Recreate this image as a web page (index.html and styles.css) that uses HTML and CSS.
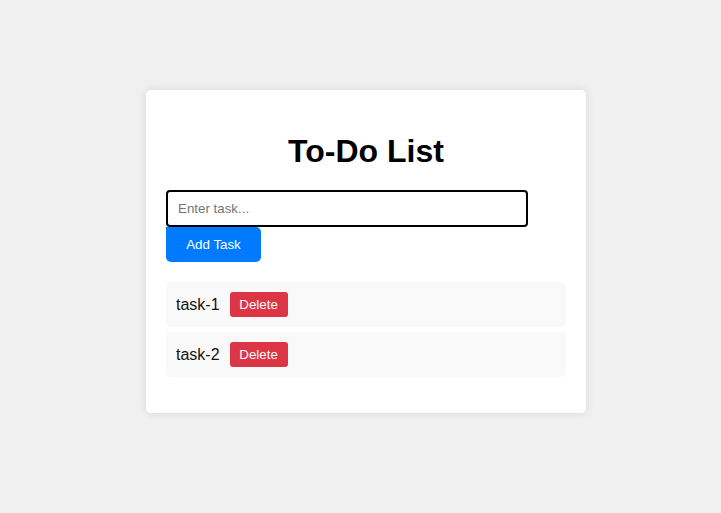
FILE: index.html
```html
<!DOCTYPE html>
<html lang="en">
<head>
    <meta charset="UTF-8">
    <title>To-Do List</title>
    <meta name="viewport" content="width=device-width, initial-scale=1.0">
    <link rel="stylesheet" href="styles.css">
</head>
<body>
    <div class="container">
        <h1>To-Do List</h1>
        <div class="add-row">
            <input type="text" id="taskInput" placeholder="Enter task..."><button class="add-btn" id="addBtn">Add Task</button>
        </div>
        <ul id="taskList">
            <li><span>task-1</span><button class="delete-btn">Delete</button></li>
            <li><span>task-2</span><button class="delete-btn">Delete</button></li>
        </ul>
    </div>
</body>
</html>
```

FILE: styles.css
```css
* {
    box-sizing: border-box;
}

body {
    margin: 0;
    padding: 0 0 10px 11px;
    min-height: 100vh;
    background: #f0f0f0;
    font-family: Arial, "Liberation Sans", sans-serif;
    display: flex;
    justify-content: center;
    align-items: center;
}

.container {
    width: 440px;
    background: #fff;
    padding: 20px;
    border-radius: 5px;
    box-shadow: 0 0 10px rgba(0,0,0,0.1);
}

h1 {
    text-align: center;
    font-size: 32px;
    margin: 23px 0 20px;
    color: #000;
}

.add-row {
    line-height: 0;
}

#taskInput {
    width: 362px;
    height: 37px;
    padding: 9px 10px;
    border: 2px solid #000;
    border-radius: 4px;
    font-family: Arial, "Liberation Sans", sans-serif;
    font-size: 13.33px;
    outline: none;
    vertical-align: top;
}

#taskInput::placeholder {
    color: #757575;
}

.add-btn {
    width: 95px;
    height: 35px;
    border: none;
    background: #007bff;
    color: #fff;
    font-family: Arial, "Liberation Sans", sans-serif;
    font-size: 13.33px;
    border-radius: 0 5px 5px 5px;
    vertical-align: top;
}

ul {
    list-style: none;
    padding: 0;
    margin: 20px 0 16px;
}

li {
    display: flex;
    align-items: center;
    height: 45px;
    padding: 0 10px;
    margin-bottom: 5px;
    background: #f9f9f9;
    border-radius: 5px;
    font-size: 16px;
    color: #111;
}

li:last-child {
    margin-bottom: 0;
}

.delete-btn {
    margin-left: 10px;
    width: 58px;
    height: 25px;
    border: none;
    border-radius: 3px;
    background: #dc3545;
    color: #fff;
    font-family: Arial, "Liberation Sans", sans-serif;
    font-size: 13.33px;
}
```
